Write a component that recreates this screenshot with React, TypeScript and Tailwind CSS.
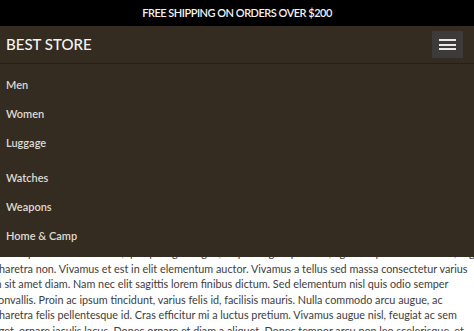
import React from 'react';

const groups = [
  ['Men', 'Women', 'Luggage'],
  ['Watches', 'Weapons', 'Home & Camp'],
];

const lines = [
  'Lorem ipsum dolor sit amet, quisque eget augue, aliquam ligula pulvinar, egestas quam vitae lorem, sagittis purus',
  'pharetra non. Vivamus et est in elit elementum auctor. Vivamus a tellus sed massa consectetur varius',
  'in sit amet diam. Nam nec elit sagittis lorem finibus dictum. Sed elementum nisl quis odio semper',
  'convallis. Proin ac ipsum tincidunt, varius felis id, facilisis mauris. Nulla commodo arcu augue, ac',
  'pharetra felis pellentesque id. Cras efficitur mi a luctus pretium. Vivamus augue nisl, feugiat ac sem',
  'eget, ornare iaculis lacus. Donec ornare et diam a aliquet. Donec tempor arcu non leo scelerisque, et',
];

export default function App() {
  return (
    <div className="h-[331px] overflow-hidden bg-white" style={{ fontFamily: 'Lato, "Open Sans", sans-serif' }}>
      <div className="flex h-[26px] items-center justify-center bg-black text-[11px] font-semibold tracking-[-0.5px] text-[#f2f2f2]">
        FREE SHIPPING ON ORDERS OVER $200
      </div>

      <header className="relative z-10">
        <nav className="flex h-[38px] items-center justify-between border-b border-[#26201a] bg-[#342c20] pl-[6px] pr-[11px]">
          <span className="text-[15px] font-medium text-[#f4f4f4]">BEST STORE</span>
          <button className="flex h-[27px] w-[31px] flex-col items-center justify-center gap-[2.5px] bg-[#3c3b39]">
            <span className="h-[2px] w-[17px] bg-[#e8e8e8]" />
            <span className="h-[2px] w-[17px] bg-[#e8e8e8]" />
            <span className="h-[2px] w-[17px] bg-[#e8e8e8]" />
          </button>
        </nav>

        <div className="absolute left-0 right-0 top-full flex h-[193px] flex-col justify-center gap-[6px] bg-[#342c20]">
          {groups.map((group, i) => (
            <ul key={i} className="flex flex-col">
              {group.map((item) => (
                <li key={item} className="flex h-[29px] shrink-0 items-center px-[6px] text-[11px] font-semibold text-[#dedad4]">
                  {item}
                </li>
              ))}
            </ul>
          ))}
        </div>
      </header>

      <main className="-ml-[7px] pt-[181px] text-[10.8px] leading-[15.5px] text-[#3d3d3d]">
        {lines.map((line, i) => (
          <div key={i} className="whitespace-nowrap">{line}</div>
        ))}
      </main>
    </div>
  );
}
